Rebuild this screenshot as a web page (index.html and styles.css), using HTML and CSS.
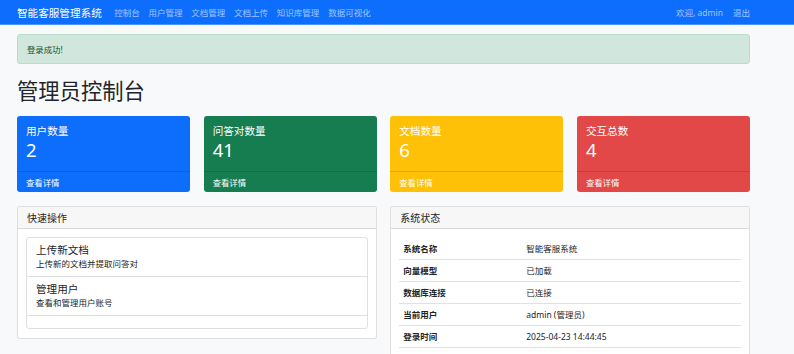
FILE: index.html
```html
<!DOCTYPE html>
<html lang="zh-CN">
<head>
<meta charset="utf-8">
<title>智能客服管理系统</title>
<link rel="stylesheet" href="styles.css">
</head>
<body>
<nav class="navbar">
  <div class="nav-inner">
    <span class="brand">智能客服管理系统</span>
    <ul class="nav-links">
      <li>控制台</li>
      <li>用户管理</li>
      <li>文档管理</li>
      <li>文档上传</li>
      <li>知识库管理</li>
      <li>数据可视化</li>
    </ul>
    <ul class="nav-right">
      <li>欢迎, admin</li>
      <li>退出</li>
    </ul>
  </div>
</nav>
<main class="container">
  <div class="alert">登录成功!</div>
  <h1 class="page-title">管理员控制台</h1>
  <div class="stats">
    <div class="stat blue">
      <div class="stat-body"><div class="stat-label">用户数量</div><div class="stat-value">2</div></div>
      <div class="stat-footer">查看详情</div>
    </div>
    <div class="stat green">
      <div class="stat-body"><div class="stat-label">问答对数量</div><div class="stat-value">41</div></div>
      <div class="stat-footer">查看详情</div>
    </div>
    <div class="stat yellow">
      <div class="stat-body"><div class="stat-label">文档数量</div><div class="stat-value">6</div></div>
      <div class="stat-footer">查看详情</div>
    </div>
    <div class="stat red">
      <div class="stat-body"><div class="stat-label">交互总数</div><div class="stat-value">4</div></div>
      <div class="stat-footer">查看详情</div>
    </div>
  </div>
  <div class="panels">
    <section class="panel">
      <div class="panel-header">快速操作</div>
      <div class="panel-body">
        <div class="list">
          <div class="list-item">
            <div class="item-title">上传新文档</div>
            <div class="item-desc">上传新的文档并提取问答对</div>
          </div>
          <div class="list-item">
            <div class="item-title">管理用户</div>
            <div class="item-desc">查看和管理用户账号</div>
          </div>
          <div class="list-item empty"></div>
        </div>
      </div>
    </section>
    <section class="panel">
      <div class="panel-header">系统状态</div>
      <div class="panel-body">
        <table class="status">
          <tr><th>系统名称</th><td>智能客服系统</td></tr>
          <tr><th>向量模型</th><td>已加载</td></tr>
          <tr><th>数据库连接</th><td>已连接</td></tr>
          <tr><th>当前用户</th><td>admin (管理员)</td></tr>
          <tr><th>登录时间</th><td>2025-04-23 14:44:45</td></tr>
        </table>
      </div>
    </section>
  </div>
</main>
</body>
</html>
```
FILE: styles.css
```css
* { box-sizing: border-box; }
html, body { margin: 0; padding: 0; }
body {
  background: #f8f9fa;
  font-family: "Noto Sans", "Noto Sans CJK SC", sans-serif;
  color: #212529;
  overflow: hidden;
}
.navbar {
  background: #0d6efd;
  height: 25px;
  border-bottom: 1px solid #4f95ff;
}
.nav-inner {
  display: flex;
  align-items: center;
  height: 100%;
  padding: 0 44px 0 17px;
}
.brand {
  color: #fff;
  font-size: 10.6px;
  margin-right: 8px;
}
.nav-links, .nav-right {
  list-style: none;
  margin: 0;
  padding: 0;
  display: flex;
  font-size: 8.5px;
  color: rgba(255,255,255,0.6);
}
.nav-links li { padding: 0 4.4px; }
.nav-right { margin-left: auto; gap: 10px; }
.container {
  width: 733px;
  margin-left: 17px;
  padding-top: 9px;
}
.alert {
  background: #d1e7dd;
  border: 1px solid #badbcc;
  color: #0f5132;
  border-radius: 3px;
  height: 30px;
  font-size: 8.4px;
  display: flex;
  align-items: center;
  padding: 0 9px;
}
.page-title {
  font-weight: 400;
  font-size: 21.3px;
  margin: 12px 0 0;
  line-height: 30px;
  height: 30px;
}
.stats {
  display: grid;
  grid-template-columns: repeat(4, 1fr);
  gap: 13.5px;
  margin-top: 10px;
}
.stat {
  height: 76px;
  border-radius: 3px;
  color: #fff;
  display: flex;
  flex-direction: column;
}
.blue { background: #0d6efd; }
.green { background: #167d51; }
.yellow { background: #ffc107; }
.red { background: #e34848; }
.stat-body {
  flex: 1;
  padding: 8px 9px 0;
}
.stat-label { font-size: 10.6px; line-height: 14px; }
.stat-value { font-size: 18.5px; line-height: 24px; }
.stat-footer {
  height: 21px;
  border-top: 1px solid rgba(0,0,0,0.125);
  font-size: 8.4px;
  padding: 0 9px;
  display: flex;
  align-items: center;
}
.panels {
  display: grid;
  grid-template-columns: 1fr 1fr;
  gap: 13.5px;
  margin-top: 14px;
  align-items: start;
}
.panel {
  background: #fff;
  border: 1px solid rgba(0,0,0,0.125);
  border-radius: 3px;
  overflow: hidden;
}
.panel-header {
  background: #f7f7f7;
  border-bottom: 1px solid rgba(0,0,0,0.125);
  height: 22px;
  font-size: 10px;
  padding: 0 9px;
  display: flex;
  align-items: center;
  color: #212529;
}
.panel-body { padding: 8px 8px 9px; }
.list {
  border: 1px solid rgba(0,0,0,0.125);
  border-radius: 3px;
}
.list-item {
  height: 39px;
  padding: 5px 9px 0;
  border-bottom: 1px solid rgba(0,0,0,0.125);
}
.list-item.empty { height: 12px; border-bottom: none; }
.item-title { font-size: 10.6px; line-height: 14px; }
.item-desc { font-size: 8.5px; line-height: 12px; margin-top: 1px; }
.status {
  width: 100%;
  border-collapse: collapse;
  font-size: 8.5px;
}
.status tr { height: 22px; border-bottom: 1px solid #dee2e6; }
.status th { text-align: left; font-weight: 700; width: 123px; padding: 0 4px; }
.status td { padding: 0 4px; }
```
